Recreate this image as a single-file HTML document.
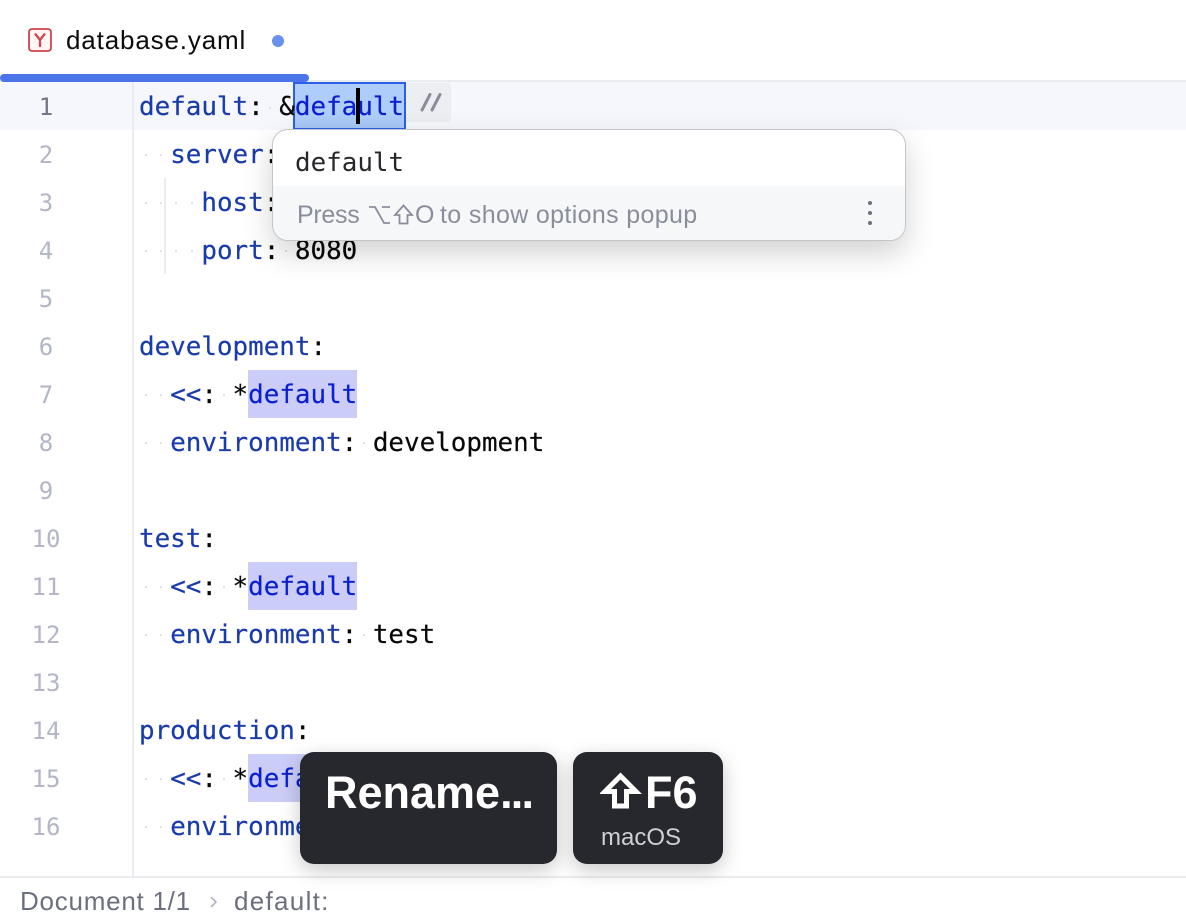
<!DOCTYPE html>
<html><head><meta charset="utf-8">
<style>
html,body{margin:0;padding:0;background:#fff}
#r{position:relative;width:1186px;height:920px;overflow:hidden;background:#fff;font-family:"Liberation Sans",sans-serif}
.abs{position:absolute}
.l{position:absolute;left:139px;height:48px;line-height:51px;white-space:pre;font-family:"DejaVu Sans Mono","Liberation Mono",monospace;font-size:25.9px;letter-spacing:0;color:#080808;-webkit-text-stroke:.2px currentColor}
.k{color:#1a3bab}
.a{color:#0b1fd0}
.n{position:absolute;left:30px;width:32px;text-align:center;height:48px;line-height:50px;font-family:"DejaVu Sans Mono","Liberation Mono",monospace;font-size:24px;color:#b2b6c6}
.d{position:absolute;width:2px;height:2px;border-radius:1px;background:#d4d5d8}
.hl{position:absolute;left:248px;width:109px;height:48px;background:#cbcdf8}
</style></head><body>
<div id="r">
<!-- tab -->
<svg class="abs" style="left:28px;top:28px" width="24" height="24" viewBox="0 0 24 24"><rect x="1" y="1" width="22" height="22" rx="3" fill="#fff5f5" stroke="#d0454c" stroke-width="1.8"/><path d="M7 5.5L12 12L17 5.5M12 12V19" fill="none" stroke="#d0454c" stroke-width="2.3"/></svg>
<div class="abs" style="left:66px;top:24px;font-size:26px;line-height:32px;color:#0c0c0e;letter-spacing:.85px">database.yaml</div>
<div class="abs" style="left:272px;top:35px;width:12px;height:12px;border-radius:6px;background:#6a90ee"></div>
<div class="abs" style="left:0;top:80px;width:1186px;height:2px;background:#ebecf0"></div>
<div class="abs" style="left:0;top:74px;width:309px;height:8px;border-radius:4px;background:#4a74e8"></div>
<!-- current line -->
<div class="abs" style="left:0;top:82px;width:1186px;height:48px;background:#f6f7fd"></div>
<!-- gutter -->
<div class="abs" style="left:132px;top:82px;width:2px;height:795px;background:#ebecf0"></div>
<!-- indent guide -->
<div class="abs" style="left:164px;top:178px;width:2px;height:96px;background:#ebecf0"></div>
<!-- highlights -->
<div class="hl" style="top:370px"></div>
<div class="hl" style="top:562px"></div>
<div class="hl" style="top:754px"></div>
<!-- hint -->
<div class="abs" style="left:406px;top:83px;width:45px;height:39px;background:#eceef2;border-radius:0 3px 3px 0"></div>
<svg class="abs" style="left:418px;top:90px" width="24" height="24" viewBox="0 0 24 24"><path d="M4 20L12 4.5M14 20L22 4.5" stroke="#8b8e98" stroke-width="3" fill="none" stroke-linecap="round"/></svg>
<!-- selection -->
<div class="abs" style="left:293px;top:82px;width:109px;height:44px;background:linear-gradient(#aecdfa 70%,#a6c6f4);border:2px solid #2c5ee8"></div>
<!-- numbers -->
<div class="n" style="top:82px;color:#737684">1</div>
<div class="n" style="top:130px">2</div>
<div class="n" style="top:178px">3</div>
<div class="n" style="top:226px">4</div>
<div class="n" style="top:274px">5</div>
<div class="n" style="top:322px">6</div>
<div class="n" style="top:370px">7</div>
<div class="n" style="top:418px">8</div>
<div class="n" style="top:466px">9</div>
<div class="n" style="top:514px">10</div>
<div class="n" style="top:562px">11</div>
<div class="n" style="top:610px">12</div>
<div class="n" style="top:658px">13</div>
<div class="n" style="top:706px">14</div>
<div class="n" style="top:754px">15</div>
<div class="n" style="top:802px">16</div>
<!-- whitespace dots -->
<div class="d" style="left:269px;top:107px"></div>
<div class="d" style="left:145px;top:154px"></div><div class="d" style="left:160px;top:154px"></div>
<div class="d" style="left:145px;top:202px"></div><div class="d" style="left:160px;top:202px"></div><div class="d" style="left:175px;top:202px"></div><div class="d" style="left:191px;top:202px"></div>
<div class="d" style="left:145px;top:250px"></div><div class="d" style="left:160px;top:250px"></div><div class="d" style="left:175px;top:250px"></div><div class="d" style="left:191px;top:250px"></div><div class="d" style="left:285px;top:250px"></div>
<div class="d" style="left:145px;top:394px"></div><div class="d" style="left:160px;top:394px"></div><div class="d" style="left:223px;top:394px"></div>
<div class="d" style="left:145px;top:442px"></div><div class="d" style="left:160px;top:442px"></div><div class="d" style="left:363px;top:442px"></div>
<div class="d" style="left:145px;top:586px"></div><div class="d" style="left:160px;top:586px"></div><div class="d" style="left:223px;top:586px"></div>
<div class="d" style="left:145px;top:634px"></div><div class="d" style="left:160px;top:634px"></div><div class="d" style="left:363px;top:634px"></div>
<div class="d" style="left:145px;top:778px"></div><div class="d" style="left:160px;top:778px"></div><div class="d" style="left:223px;top:778px"></div>
<div class="d" style="left:145px;top:826px"></div><div class="d" style="left:160px;top:826px"></div>
<!-- code -->
<div class="l" style="top:82px"><span class="k">default</span>: &amp;<span class="a">default</span></div>
<div class="l" style="top:130px">  <span class="k">server</span>:</div>
<div class="l" style="top:178px">    <span class="k">host</span>:</div>
<div class="l" style="top:226px">    <span class="k">port</span>: 8080</div>
<div class="l" style="top:322px"><span class="k">development</span>:</div>
<div class="l" style="top:370px">  <span class="k">&lt;&lt;</span>: *<span class="a">default</span></div>
<div class="l" style="top:418px">  <span class="k">environment</span>: development</div>
<div class="l" style="top:514px"><span class="k">test</span>:</div>
<div class="l" style="top:562px">  <span class="k">&lt;&lt;</span>: *<span class="a">default</span></div>
<div class="l" style="top:610px">  <span class="k">environment</span>: test</div>
<div class="l" style="top:706px"><span class="k">production</span>:</div>
<div class="l" style="top:754px">  <span class="k">&lt;&lt;</span>: *<span class="a">default</span></div>
<div class="l" style="top:802px">  <span class="k">environment</span></div>
<!-- caret -->
<div class="abs" style="left:356px;top:88px;width:4px;height:36px;background:#000"></div>
<!-- popup -->
<div class="abs" style="left:272px;top:129px;width:632px;height:110px;border:1px solid #c4c5c9;border-radius:16px;background:#fff;box-shadow:0 12px 30px rgba(0,0,0,.18);overflow:hidden">
  <div class="abs" style="left:0;top:56px;width:100%;height:54px;background:#f6f7f9"></div>
  <div class="abs" style="left:22px;top:10px;height:46px;line-height:46px;font-family:'DejaVu Sans Mono','Liberation Mono',monospace;font-size:25.9px;color:#27282c;white-space:pre">default</div>
  <div class="abs" style="left:24px;top:71px;line-height:28px;font-size:25px;letter-spacing:-.3px;color:#8a8e9c;white-space:pre">Press</div>
  <div class="abs" style="left:142px;top:71px;line-height:28px;font-size:25px;color:#8a8e9c;white-space:pre">O</div>
  <div class="abs" style="left:167px;top:71px;line-height:28px;font-size:25px;letter-spacing:.35px;color:#8a8e9c;white-space:pre">to show options popup</div>
  <svg class="abs" style="left:96px;top:74px" width="48" height="22" viewBox="0 0 48 22"><path d="M0 3H6L15 19H21M13 3H21" fill="none" stroke="#8a8e9c" stroke-width="1.8"/><path d="M34.5 1.5L26 11H30.5V19.5H38.5V11H43Z" fill="none" stroke="#8a8e9c" stroke-width="1.8"/></svg>
  <div class="abs" style="left:595px;top:71px;width:4px;height:4px;border-radius:2px;background:#6c707e"></div>
  <div class="abs" style="left:595px;top:81px;width:4px;height:4px;border-radius:2px;background:#6c707e"></div>
  <div class="abs" style="left:595px;top:91px;width:4px;height:4px;border-radius:2px;background:#6c707e"></div>
</div>
<!-- status -->
<div class="abs" style="left:0;top:876px;width:1186px;height:2px;background:#ebecf0"></div>
<div class="abs" style="left:20px;top:885px;line-height:32px;font-size:26px;letter-spacing:.75px;color:#6c707e;white-space:pre">Document 1/1</div>
<svg class="abs" style="left:207px;top:893px" width="12" height="18" viewBox="0 0 12 18"><path d="M4 4L9 9L4 14" fill="none" stroke="#a8adbd" stroke-width="1.5"/></svg>
<div class="abs" style="left:234px;top:885px;line-height:32px;font-size:26px;letter-spacing:1.3px;color:#6c707e;white-space:pre">default:</div>
<!-- overlays -->
<div class="abs" style="left:300px;top:752px;width:257px;height:112px;border-radius:14px;background:#27282e;box-shadow:0 6px 20px rgba(0,0,0,.22)"></div>
<div class="abs" style="left:325px;top:765px;line-height:56px;font-size:45px;font-weight:bold;color:#fff;white-space:pre">Rename<span style="letter-spacing:-1.8px">...</span></div>
<div class="abs" style="left:573px;top:752px;width:150px;height:112px;border-radius:14px;background:#27282e;box-shadow:0 6px 20px rgba(0,0,0,.22)"></div>
<svg class="abs" style="left:600px;top:772px" width="42" height="38" viewBox="0 0 42 38"><path d="M20.5 4L36 19.5H26.5V34H14.5V19.5H5Z" fill="none" stroke="#fff" stroke-width="5"/></svg>
<div class="abs" style="left:645px;top:765px;line-height:56px;font-size:45px;font-weight:bold;color:#fff;white-space:pre">F6</div>
<div class="abs" style="left:601px;top:823px;line-height:30px;font-size:24px;color:#ced0d6;white-space:pre">macOS</div>
</div>
</body></html>
